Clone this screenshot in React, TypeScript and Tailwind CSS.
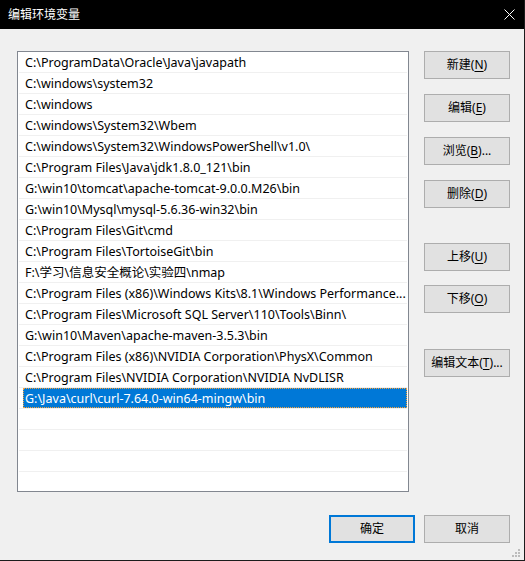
import React from "react";

const items = [
  "C:\\ProgramData\\Oracle\\Java\\javapath",
  "C:\\windows\\system32",
  "C:\\windows",
  "C:\\windows\\System32\\Wbem",
  "C:\\windows\\System32\\WindowsPowerShell\\v1.0\\",
  "C:\\Program Files\\Java\\jdk1.8.0_121\\bin",
  "G:\\win10\\tomcat\\apache-tomcat-9.0.0.M26\\bin",
  "G:\\win10\\Mysql\\mysql-5.6.36-win32\\bin",
  "C:\\Program Files\\Git\\cmd",
  "C:\\Program Files\\TortoiseGit\\bin",
  "F:\\学习\\信息安全概论\\实验四\\nmap",
  "C:\\Program Files (x86)\\Windows Kits\\8.1\\Windows Performance...",
  "C:\\Program Files\\Microsoft SQL Server\\110\\Tools\\Binn\\",
  "G:\\win10\\Maven\\apache-maven-3.5.3\\bin",
  "C:\\Program Files (x86)\\NVIDIA Corporation\\PhysX\\Common",
  "C:\\Program Files\\NVIDIA Corporation\\NVIDIA NvDLISR",
  "G:\\Java\\curl\\curl-7.64.0-win64-mingw\\bin",
];

function Btn({ label, k, suffix = "", className = "" }: { label: string; k: string; suffix?: string; className?: string }) {
  return (
    <div
      className={
        "w-[86px] h-[28px] bg-[#e1e1e1] border border-[#adadad] flex items-center justify-center text-[12px] text-black " +
        className
      }
    >
      <span>
        {label}(<span className="underline underline-offset-2">{k}</span>){suffix}
      </span>
    </div>
  );
}

export default function App() {
  const font = { fontFamily: '"Noto Sans", "Noto Sans CJK SC", sans-serif' };
  return (
    <div
      className="w-[525px] h-[561px] flex flex-col border-r border-b border-[#1c1c1c] bg-[#f0f0f0] relative"
      style={font}
    >
      <div className="h-[29px] bg-black flex items-center justify-between pl-[8px] pr-[9px] shrink-0">
        <span className="text-white text-[12px] leading-none">编辑环境变量</span>
        <svg width="11" height="11" viewBox="0 0 11 11">
          <path d="M0.5 0.5 L10.5 10.5 M10.5 0.5 L0.5 10.5" stroke="white" strokeWidth="1" />
        </svg>
      </div>
      <div className="flex-1 flex flex-col">
        <div className="flex pt-[22px] pl-[17px]">
          <div className="w-[392px] h-[441px] border border-[#828790] bg-white overflow-hidden shrink-0">
            {items.concat(Array(5).fill("")).map((t, i) => {
              const sel = i === 16;
              return (
                <div key={i} className="h-[21px] border-b border-[#f0f0f0] ml-[1px] mr-[1px]">
                  <div
                    className={
                      "h-[20px] ml-[4px] pl-[2px] text-[12.5px] leading-[21px] whitespace-nowrap " +
                      (sel
                        ? "bg-[#0078d7] text-white outline-1 outline-dotted outline-[#f7a23a] -outline-offset-1"
                        : "text-black")
                    }
                  >
                    {t}
                  </div>
                </div>
              );
            })}
          </div>
          <div className="ml-[15px] flex flex-col">
            <Btn label="新建" k="N" />
            <Btn label="编辑" k="E" className="mt-[15px]" />
            <Btn label="浏览" k="B" suffix="..." className="mt-[15px]" />
            <Btn label="删除" k="D" className="mt-[15px]" />
            <Btn label="上移" k="U" className="mt-[35px]" />
            <Btn label="下移" k="O" className="mt-[14px]" />
            <Btn label="编辑文本" k="T" suffix="..." className="mt-[36px]" />
          </div>
        </div>
        <div className="flex justify-end pr-[14px] mt-[23px] gap-[9px]">
          <div className="w-[86px] h-[28px] bg-[#e1e1e1] border-2 border-[#0078d7] flex items-center justify-center text-[12px] text-black">
            确定
          </div>
          <div className="w-[86px] h-[28px] bg-[#e1e1e1] border border-[#adadad] flex items-center justify-center text-[12px] text-black">
            取消
          </div>
        </div>
      </div>
      <svg className="absolute right-[4px] bottom-[3px]" width="8" height="8" viewBox="0 0 8 8">
        <rect x="6" y="0" width="2" height="2" fill="#bcbcbc" />
        <rect x="3" y="3" width="2" height="2" fill="#bcbcbc" />
        <rect x="6" y="3" width="2" height="2" fill="#bcbcbc" />
        <rect x="0" y="6" width="2" height="2" fill="#bcbcbc" />
        <rect x="3" y="6" width="2" height="2" fill="#bcbcbc" />
        <rect x="6" y="6" width="2" height="2" fill="#bcbcbc" />
      </svg>
    </div>
  );
}
